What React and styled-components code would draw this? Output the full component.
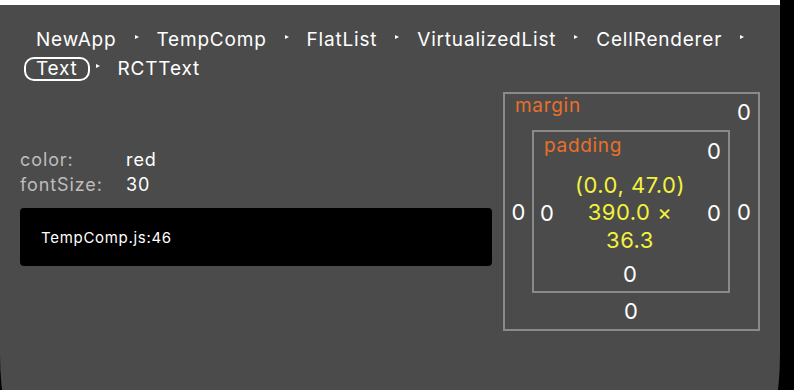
import React from 'react';
import styled, { createGlobalStyle } from 'styled-components';

const GlobalStyle = createGlobalStyle`
  body {
    margin: 0;
    background: #000;
    font-family: Inter, "Noto Sans", sans-serif;
  }
`

const Frame = styled.div`
  width: 794px;
  height: 390px;
  overflow: hidden;
  display: flex;
  align-items: flex-start;
  background: #000;
`

const Screen = styled.div`
  width: 780px;
  height: 655px;
  flex-shrink: 0;
  box-sizing: border-box;
  background: #4b4b4b;
  border-top: 5px solid #fff;
  border-bottom-left-radius: 300px;
  border-bottom-right-radius: 300px;
  color: #fff;
`

const Crumbs = styled.div`
  display: flex;
  flex-wrap: wrap;
  row-gap: 5px;
  padding: 23px 10px 0 24px;
`

const Crumb = styled.div`
  font-size: 19px;
  line-height: 20px;
  letter-spacing: 0.8px;
  padding: 0 10px;
  border: 2px solid ${p => (p.$selected ? '#fff' : 'transparent')};
  border-radius: 10px;
  color: #fff;
`

const Sep = styled.span`
  align-self: flex-start;
  width: 0;
  height: 0;
  margin: 7px 6px 0 6px;
  border-left: 4px solid #fff;
  border-top: 2.5px solid transparent;
  border-bottom: 2.5px solid transparent;
`

const Body = styled.div`
  display: flex;
  align-items: flex-start;
  margin-top: 11px;
  padding-left: 20px;
  gap: 11px;
`

const Details = styled.div`
  width: 472px;
  padding-top: 55px;
`

const StyleRow = styled.div`
  display: flex;
  font-size: 18px;
  line-height: 25px;
  letter-spacing: 0.9px;
`

const Key = styled.span`
  width: 106px;
  color: #bdbdbd;
`

const Value = styled.span`
  color: #fff;
`

const Source = styled.div`
  margin-top: 11px;
  height: 58px;
  background: #000;
  border-radius: 4px;
  display: flex;
  align-items: center;
  padding-left: 21px;
  font-size: 15px;
  letter-spacing: 0.7px;
  color: #fff;
`

const Box = styled.div`
  box-sizing: border-box;
  border: 2px solid #8a8a8a;
  display: grid;
  grid-template-columns: ${p => p.$cols};
  grid-template-rows: ${p => p.$rows};
  width: ${p => p.$width || 'auto'};
  height: ${p => p.$height || 'auto'};
`

const TopRow = styled.div`
  grid-column: 1 / 3;
  padding: ${p => p.$pad}px 0 0 10px;
  color: #e8702a;
  font-size: 19px;
  line-height: 20px;
  letter-spacing: 0.7px;
  white-space: nowrap;
`

const Num = styled.div`
  display: flex;
  align-items: center;
  justify-content: center;
  font-size: 22px;
  color: #fff;
  grid-column: ${p => p.$col || 'auto'};
`

const Size = styled.div`
  display: flex;
  align-items: center;
  justify-content: center;
  text-align: center;
  color: #f4f23c;
  font-size: 22px;
  line-height: 27.5px;
  letter-spacing: 0.5px;
  white-space: nowrap;
`

export default function App() {
  const path = ['NewApp', 'TempComp', 'FlatList', 'VirtualizedList', 'CellRenderer', 'Text', 'RCTText']
  return (
    <Frame>
      <GlobalStyle />
      <Screen>
        <Crumbs>
          {path.map((name, i) => (
            <React.Fragment key={name}>
              <Crumb $selected={name === 'Text'}>{name}</Crumb>
              {i < path.length - 1 && <Sep />}
            </React.Fragment>
          ))}
        </Crumbs>
        <Body>
          <Details>
            <StyleRow><Key>color:</Key><Value>red</Value></StyleRow>
            <StyleRow><Key>fontSize:</Key><Value>30</Value></StyleRow>
            <Source>TempComp.js:46</Source>
          </Details>
          <Box $cols="27px 1fr 28px" $rows="36px 1fr 36px" $width="257px" $height="239px">
            <TopRow $pad={2}>margin</TopRow>
            <Num>0</Num>
            <Num>0</Num>
            <Box $cols="26px 1fr 28px" $rows="38px 1fr 35px">
              <TopRow $pad={4}>padding</TopRow>
              <Num>0</Num>
              <Num>0</Num>
              <Size>(0.0, 47.0)<br />390.0 ×<br />36.3</Size>
              <Num>0</Num>
              <Num $col="2">0</Num>
            </Box>
            <Num>0</Num>
            <Num $col="2">0</Num>
          </Box>
        </Body>
      </Screen>
    </Frame>
  )
}
